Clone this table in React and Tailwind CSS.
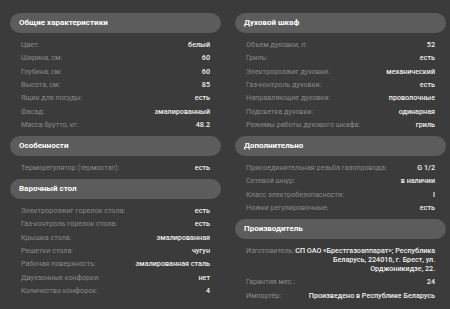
const left = [
  {
    title: "Общие характеристики",
    rows: [
      ["Цвет:", "белый"],
      ["Ширина, см:", "60"],
      ["Глубина, см:", "60"],
      ["Высота, см:", "85"],
      ["Ящик для посуды:", "есть"],
      ["Фасад:", "эмалированный"],
      ["Масса брутто, кг:", "48.2"],
    ],
  },
  {
    title: "Особенности",
    rows: [["Терморегулятор (термостат):", "есть"]],
  },
  {
    title: "Варочный стол",
    rows: [
      ["Электророзжиг горелок стола:", "есть"],
      ["Газ-контроль горелок стола:", "есть"],
      ["Крышка стола:", "эмалированная"],
      ["Решетки стола:", "чугун"],
      ["Рабочая поверхность:", "эмалированная сталь"],
      ["Двухзонные конфорки:", "нет"],
      ["Количество конфорок:", "4"],
    ],
  },
];

const right = [
  {
    title: "Духовой шкаф",
    rows: [
      ["Объем духовки, л:", "52"],
      ["Гриль:", "есть"],
      ["Электророзжиг духовки:", "механический"],
      ["Газ-контроль духовки:", "есть"],
      ["Направляющие духовки:", "проволочные"],
      ["Подсветка духовки:", "одинарная"],
      ["Режимы работы духового шкафа:", "гриль"],
    ],
  },
  {
    title: "Дополнительно",
    rows: [
      ["Присоединительная резьба газопровода:", "G 1/2"],
      ["Сетевой шнур:", "в наличии"],
      ["Класс электробезопасности:", "I"],
      ["Ножки регулировочные:", "есть"],
    ],
  },
  {
    title: "Производитель",
    rows: [
      ["Изготовитель:", ["СП ОАО «Брестгазоаппарат»; Республика", "Беларусь, 224016, г. Брест, ул.", "Орджоникидзе, 22."]],
      ["Гарантия мес.:", "24"],
      ["Импортёр:", "Произведено в Республике Беларусь"],
    ],
  },
];

function Section({ title, rows }) {
  return (
    <div>
      <div className="h-[20px] rounded-[10px] bg-[#5c5c5c] pl-[9px] flex items-center text-[8px] font-bold text-white">
        {title}
      </div>
      <div className="pt-[5px] pb-[4.7px] pl-[11px] pr-[11px]">
        {rows.map(([k, v]) => (
          <div key={k} className="flex justify-between gap-[1px] py-[2.17px] text-[7.2px] leading-[9px]">
            <span className="text-[#8a8a8a] whitespace-nowrap">{k}</span>
            <span className="text-[#f2f2f2] font-medium text-right whitespace-nowrap">
              {Array.isArray(v)
                ? v.map((line) => (
                    <span key={line} className="block">
                      {line}
                    </span>
                  ))
                : v}
            </span>
          </div>
        ))}
      </div>
    </div>
  );
}

export default function App() {
  return (
    <div
      className="w-[450px] h-[309px] bg-[#3b3b3b] pt-[13px] pl-[10px] flex gap-[14px] overflow-hidden"
      style={{ fontFamily: "Roboto, 'Noto Sans', sans-serif" }}
    >
      <div className="w-[211px] shrink-0">
        {left.map((s) => (
          <Section key={s.title} {...s} />
        ))}
      </div>
      <div className="w-[211px] shrink-0">
        {right.map((s) => (
          <Section key={s.title} {...s} />
        ))}
      </div>
    </div>
  );
}
